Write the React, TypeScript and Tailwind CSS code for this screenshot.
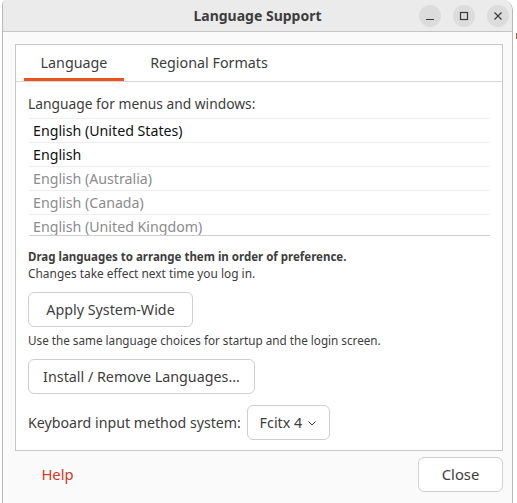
import React, { useState } from "react";

const languages = [
  { name: "English (United States)", active: true },
  { name: "English", active: true },
  { name: "English (Australia)", active: false },
  { name: "English (Canada)", active: false },
  { name: "English (United Kingdom)", active: false },
];

function TitleButton({ children }: { children: React.ReactNode }) {
  return (
    <button className="w-[22px] h-[22px] rounded-full bg-[#dcdcdc] flex items-center justify-center text-[#3a3a3a]">
      {children}
    </button>
  );
}

function PushButton({
  children,
  className = "",
}: {
  children: React.ReactNode;
  className?: string;
}) {
  return (
    <button
      className={`h-[35px] rounded-[6px] border border-[#cfcfcf] bg-white text-[14.3px] text-[#3d3d3d] flex items-center justify-center ${className}`}
    >
      {children}
    </button>
  );
}

export default function App() {
  const [tab, setTab] = useState("language");

  return (
    <div
      className="w-[517px] h-[503px] bg-white flex overflow-hidden"
      style={{ fontFamily: '"Noto Sans", "Open Sans", sans-serif' }}
    >
      <div className="w-[2px] shrink-0" />
      <div className="w-[511px] h-[503px] shrink-0 flex flex-col border-x border-[#b9b9b9] rounded-tl-[5px] rounded-tr-[10px] overflow-hidden bg-[#fafafa]">
        {/* header bar */}
        <div className="relative h-[32px] shrink-0 bg-[#ebebeb] border-b border-[#c6c6c6] flex items-center justify-end pr-[3px] gap-[12px]">
          <div className="absolute inset-0 flex items-center justify-center text-[14px] font-bold text-[#3d3d3d] pointer-events-none">
            Language Support
          </div>
          <TitleButton>
            <svg width="10" height="10" viewBox="0 0 10 10">
              <path d="M1 8.5h8" stroke="currentColor" strokeWidth="1.2" />
            </svg>
          </TitleButton>
          <TitleButton>
            <svg width="10" height="10" viewBox="0 0 10 10">
              <rect x="1.5" y="1.5" width="7" height="7" fill="none" stroke="currentColor" strokeWidth="1.2" />
            </svg>
          </TitleButton>
          <TitleButton>
            <svg width="10" height="10" viewBox="0 0 10 10">
              <path d="M1.5 1.5l7 7M8.5 1.5l-7 7" stroke="currentColor" strokeWidth="1.2" />
            </svg>
          </TitleButton>
        </div>

        {/* notebook */}
        <div className="ml-[12px] mt-[12px] w-[488px] h-[407px] border border-[#c8c8c8] bg-white flex flex-col">
          <div className="h-[37px] shrink-0 border-b border-[#d6d6d6] flex pl-[8px]">
            <button
              onClick={() => setTab("language")}
              className={`w-[100px] h-[36px] pt-[2px] text-[14.3px] text-[#3d3d3d] flex items-center justify-center border-b-[3px] ${
                tab === "language" ? "border-[#e95420]" : "border-transparent"
              }`}
            >
              Language
            </button>
            <button
              onClick={() => setTab("regional")}
              className={`w-[170px] h-[36px] pt-[2px] text-[14.3px] text-[#3d3d3d] flex items-center justify-center border-b-[3px] ${
                tab === "regional" ? "border-[#e95420]" : "border-transparent"
              }`}
            >
              Regional Formats
            </button>
          </div>

          <div className="pl-[12px] flex flex-col text-[#3d3d3d]">
            <div className="mt-[12px] h-[20px] leading-[20px] text-[13.8px]">
              Language for menus and windows:
            </div>
            <div className="mt-[4px] ml-[1px] w-[461px] h-[118px] overflow-hidden border-b border-[#cfcfcf]">
              {languages.map((lang) => (
                <div
                  key={lang.name}
                  className={`h-[24px] shrink-0 border-t border-[#efefef] pl-[4px] flex items-center text-[14.2px] ${
                    lang.active ? "text-[#111111]" : "text-[#8c8c8c]"
                  }`}
                >
                  {lang.name}
                </div>
              ))}
            </div>

            <div className="mt-[13px] text-[11.9px] leading-[16px]">
              <div className="font-bold text-[11.5px]">
                Drag languages to arrange them in order of preference.
              </div>
              <div>Changes take effect next time you log in.</div>
            </div>

            <PushButton className="mt-[11px] w-[165px]">Apply System-Wide</PushButton>

            <div className="mt-[5px] text-[11.7px] leading-[16px]">
              Use the same language choices for startup and the login screen.
            </div>

            <PushButton className="mt-[11px] w-[227px]">
              Install / Remove Languages...
            </PushButton>

            <div className="mt-[11px] flex items-center gap-[6px]">
              <span className="text-[14.2px]">Keyboard input method system:</span>
              <button className="h-[35px] w-[83px] rounded-[6px] border border-[#cfcfcf] bg-white flex items-center justify-center gap-[5px] text-[14.3px] text-[#3d3d3d]">
                Fcitx 4
                <svg width="10" height="10" viewBox="0 0 10 10">
                  <path d="M1.5 3.5l3.5 3.5 3.5-3.5" fill="none" stroke="currentColor" strokeWidth="1" />
                </svg>
              </button>
            </div>
          </div>
        </div>

        {/* footer */}
        <div className="mt-[6px] ml-[12px] w-[488px] flex items-center justify-between">
          <button className="h-[35px] w-[85px] flex items-center justify-center text-[14.8px] text-[#d03b25]">
            Help
          </button>
          <PushButton className="w-[85px] text-[14.8px]">Close</PushButton>
        </div>
      </div>
      <div className="w-[4px] shrink-0 flex flex-col">
        <div className="h-[33px]" />
        <div className="ml-[3px] w-[1px] h-[6px] bg-[#a0643c]" />
      </div>
    </div>
  );
}
